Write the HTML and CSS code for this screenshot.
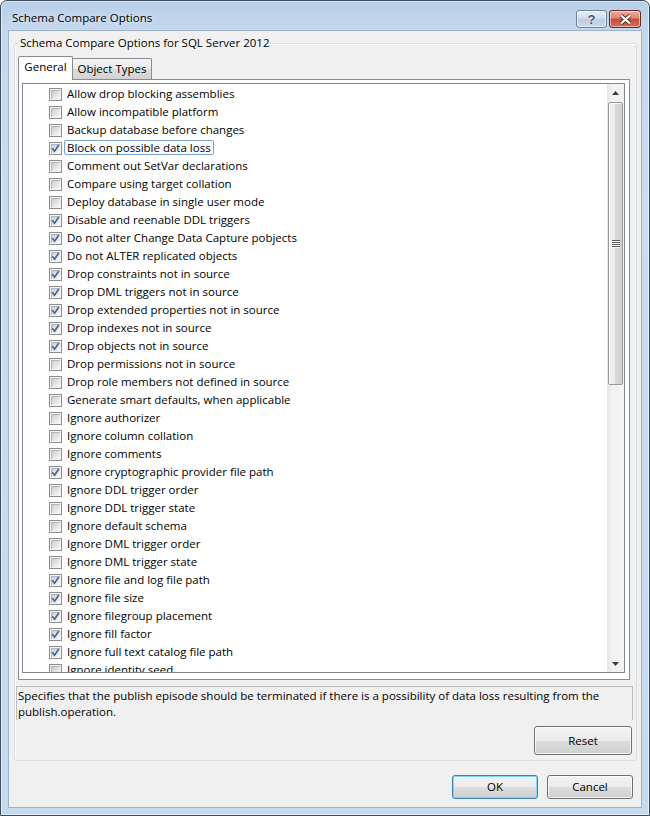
FILE: index.html
```html
<!DOCTYPE html>
<html>
<head>
<meta charset="utf-8">
<title>Schema Compare Options</title>
<link rel="stylesheet" href="styles.css">
</head>
<body>
<div class="window">
  <div class="titlebar">
    <span class="title">Schema Compare Options</span>
    <div class="caps">
      <div class="cap help"><span>?</span></div>
      <div class="cap close">
        <svg width="13" height="11" viewBox="0 0 13 11"><path d="M2 1.5 L11 9.5 M11 1.5 L2 9.5" stroke="#5a2419" stroke-width="4" fill="none"/><path d="M2 1.5 L11 9.5 M11 1.5 L2 9.5" stroke="#ffffff" stroke-width="2.3" fill="none"/></svg>
      </div>
    </div>
  </div>
  <div class="client">
    <fieldset class="group">
      <legend>Schema Compare Options for SQL Server 2012</legend>
      <div class="tabs">
        <div class="tab active">General</div>
        <div class="tab">Object Types</div>
      </div>
      <div class="tabpanel">
        <div class="listbox">
          <div class="items">
            <div class="row"><span class="cb"><span class="in"></span></span><span class="label">Allow drop blocking assemblies</span></div>
            <div class="row"><span class="cb"><span class="in"></span></span><span class="label">Allow incompatible platform</span></div>
            <div class="row"><span class="cb"><span class="in"></span></span><span class="label">Backup database before changes</span></div>
            <div class="row"><span class="cb on"><span class="in"><svg viewBox="0 0 9 9"><path d="M1.3 4.2 L3.6 7.2 L7.8 1"/></svg></span></span><span class="label focus">Block on possible data loss</span></div>
            <div class="row"><span class="cb"><span class="in"></span></span><span class="label">Comment out SetVar declarations</span></div>
            <div class="row"><span class="cb"><span class="in"></span></span><span class="label">Compare using target collation</span></div>
            <div class="row"><span class="cb"><span class="in"></span></span><span class="label">Deploy database in single user mode</span></div>
            <div class="row"><span class="cb on"><span class="in"><svg viewBox="0 0 9 9"><path d="M1.3 4.2 L3.6 7.2 L7.8 1"/></svg></span></span><span class="label">Disable and reenable DDL triggers</span></div>
            <div class="row"><span class="cb on"><span class="in"><svg viewBox="0 0 9 9"><path d="M1.3 4.2 L3.6 7.2 L7.8 1"/></svg></span></span><span class="label">Do not alter Change Data Capture pobjects</span></div>
            <div class="row"><span class="cb on"><span class="in"><svg viewBox="0 0 9 9"><path d="M1.3 4.2 L3.6 7.2 L7.8 1"/></svg></span></span><span class="label">Do not ALTER replicated objects</span></div>
            <div class="row"><span class="cb on"><span class="in"><svg viewBox="0 0 9 9"><path d="M1.3 4.2 L3.6 7.2 L7.8 1"/></svg></span></span><span class="label">Drop constraints not in source</span></div>
            <div class="row"><span class="cb on"><span class="in"><svg viewBox="0 0 9 9"><path d="M1.3 4.2 L3.6 7.2 L7.8 1"/></svg></span></span><span class="label">Drop DML triggers not in source</span></div>
            <div class="row"><span class="cb on"><span class="in"><svg viewBox="0 0 9 9"><path d="M1.3 4.2 L3.6 7.2 L7.8 1"/></svg></span></span><span class="label">Drop extended properties not in source</span></div>
            <div class="row"><span class="cb on"><span class="in"><svg viewBox="0 0 9 9"><path d="M1.3 4.2 L3.6 7.2 L7.8 1"/></svg></span></span><span class="label">Drop indexes not in source</span></div>
            <div class="row"><span class="cb on"><span class="in"><svg viewBox="0 0 9 9"><path d="M1.3 4.2 L3.6 7.2 L7.8 1"/></svg></span></span><span class="label">Drop objects not in source</span></div>
            <div class="row"><span class="cb"><span class="in"></span></span><span class="label">Drop permissions not in source</span></div>
            <div class="row"><span class="cb"><span class="in"></span></span><span class="label">Drop role members not defined in source</span></div>
            <div class="row"><span class="cb"><span class="in"></span></span><span class="label">Generate smart defaults, when applicable</span></div>
            <div class="row"><span class="cb"><span class="in"></span></span><span class="label">Ignore authorizer</span></div>
            <div class="row"><span class="cb"><span class="in"></span></span><span class="label">Ignore column collation</span></div>
            <div class="row"><span class="cb"><span class="in"></span></span><span class="label">Ignore comments</span></div>
            <div class="row"><span class="cb on"><span class="in"><svg viewBox="0 0 9 9"><path d="M1.3 4.2 L3.6 7.2 L7.8 1"/></svg></span></span><span class="label">Ignore cryptographic provider file path</span></div>
            <div class="row"><span class="cb"><span class="in"></span></span><span class="label">Ignore DDL trigger order</span></div>
            <div class="row"><span class="cb"><span class="in"></span></span><span class="label">Ignore DDL trigger state</span></div>
            <div class="row"><span class="cb"><span class="in"></span></span><span class="label">Ignore default schema</span></div>
            <div class="row"><span class="cb"><span class="in"></span></span><span class="label">Ignore DML trigger order</span></div>
            <div class="row"><span class="cb"><span class="in"></span></span><span class="label">Ignore DML trigger state</span></div>
            <div class="row"><span class="cb on"><span class="in"><svg viewBox="0 0 9 9"><path d="M1.3 4.2 L3.6 7.2 L7.8 1"/></svg></span></span><span class="label">Ignore file and log file path</span></div>
            <div class="row"><span class="cb on"><span class="in"><svg viewBox="0 0 9 9"><path d="M1.3 4.2 L3.6 7.2 L7.8 1"/></svg></span></span><span class="label">Ignore file size</span></div>
            <div class="row"><span class="cb on"><span class="in"><svg viewBox="0 0 9 9"><path d="M1.3 4.2 L3.6 7.2 L7.8 1"/></svg></span></span><span class="label">Ignore filegroup placement</span></div>
            <div class="row"><span class="cb on"><span class="in"><svg viewBox="0 0 9 9"><path d="M1.3 4.2 L3.6 7.2 L7.8 1"/></svg></span></span><span class="label">Ignore fill factor</span></div>
            <div class="row"><span class="cb on"><span class="in"><svg viewBox="0 0 9 9"><path d="M1.3 4.2 L3.6 7.2 L7.8 1"/></svg></span></span><span class="label">Ignore full text catalog file path</span></div>
            <div class="row"><span class="cb"><span class="in"></span></span><span class="label">Ignore identity seed</span></div>
          </div>
          <div class="vscroll">
            <div class="arrow"><svg width="7" height="4" viewBox="0 0 7 4"><path d="M0 4 L3.5 0 L7 4 Z" fill="#3c3c3c"/></svg></div>
            <div class="track">
              <div class="thumb"><span class="grip"></span></div>
            </div>
            <div class="arrow"><svg width="7" height="4" viewBox="0 0 7 4"><path d="M0 0 L7 0 L3.5 4 Z" fill="#3c3c3c"/></svg></div>
          </div>
        </div>
      </div>
      <div class="desc">Specifies that the publish episode should be terminated if there is a possibility of data loss resulting from the<br>publish.operation.</div>
      <div class="reset-row"><div class="btn reset">Reset</div></div>
    </fieldset>
    <div class="footer">
      <div class="btn ok">OK</div>
      <div class="btn cancel">Cancel</div>
    </div>
  </div>
</div>
</body>
</html>
```

FILE: styles.css
```css
* { box-sizing: border-box; }
html, body { margin: 0; padding: 0; }
body {
  width: 650px;
  height: 816px;
  overflow: hidden;
  background: #ffffff;
  font-family: "Open Sans", "Noto Sans", sans-serif;
  font-size: 11.5px;
  color: #000000;
}

.window {
  width: 650px;
  height: 816px;
  border: 1px solid #3e4b5c;
  border-radius: 7px 7px 0 0;
  background: linear-gradient(180deg, #b8cfe8 0px, #c4d8ee 30px, #cadcf0 200px, #c6daef 100%);
  box-shadow: inset 0 0 0 1px rgba(255, 255, 255, 0.55);
  padding: 0 7px 7px 7px;
  display: flex;
  flex-direction: column;
}

.titlebar {
  height: 29px;
  display: flex;
  align-items: flex-start;
  flex: none;
}
.title {
  margin: 9px 0 0 4px;
  line-height: 16px;
  text-shadow: 0 0 6px rgba(255, 255, 255, 0.9);
}
.caps {
  margin: 9px 1px 0 auto;
  display: flex;
  gap: 2px;
}
.cap {
  height: 18px;
  border-radius: 3px;
  border: 1px solid #6f819b;
  display: flex;
  align-items: center;
  justify-content: center;
  box-shadow: inset 0 0 0 1px rgba(255, 255, 255, 0.5);
}
.cap.help {
  width: 31px;
  background: linear-gradient(180deg, #e6edf6 0%, #d2deec 45%, #bccde3 50%, #c9d9ec 100%);
}
.cap.help span {
  font-family: "Liberation Sans", sans-serif;
  font-weight: bold;
  font-size: 13px;
  line-height: 13px;
  color: #44546a;
  text-shadow: 0 0 1px #ffffff, 0 0 2px #ffffff;
}
.cap.close {
  width: 32px;
  border-color: #6b2a21;
  background: linear-gradient(180deg, #eaaa9d 0%, #dc8676 45%, #c84a35 50%, #d0705c 100%);
}
.cap.close svg { display: block; }

.client {
  flex: 1;
  background: #f0f0f0;
  border: 1px solid #9eb2ca;
  display: flex;
  flex-direction: column;
}

.group {
  margin: 4px 4px 0 5px;
  border: 1px solid #d5dfe5;
  border-radius: 3px;
  padding: 5px 6px 5px 3px;
  min-width: 0;
  box-shadow: inset 1px 1px 0 #ffffff;
}
.group legend {
  padding: 0 2px;
  line-height: 16px;
}

.tabs {
  display: flex;
  align-items: flex-end;
  height: 23px;
  position: relative;
  z-index: 1;
}
.tab {
  border: 1px solid #898c95;
  border-bottom: none;
  border-radius: 2px 2px 0 0;
  text-align: center;
  white-space: nowrap;
}
.tab.active {
  width: 55px;
  height: 24px;
  margin-bottom: -1px;
  background: #ffffff;
  line-height: 20px;
  position: relative;
  z-index: 2;
}
.tab:not(.active) {
  width: 80px;
  height: 21px;
  margin-left: -1px;
  line-height: 20px;
  background: linear-gradient(180deg, #f3f3f3 0%, #ebebeb 50%, #dddddd 50%, #d2d2d2 100%);
}

.tabpanel {
  border: 1px solid #898c95;
  background: #ffffff;
  padding: 3px 4px 6px 3px;
}

.listbox {
  height: 590px;
  border: 1px solid #828790;
  display: flex;
  overflow: hidden;
  background: #ffffff;
}
.items {
  flex: 1;
  min-width: 0;
  padding: 0 0 0 26px;
  overflow: hidden;
}
.row {
  height: 18px;
  display: flex;
  align-items: center;
}
.cb {
  width: 13px;
  height: 13px;
  flex: none;
  border: 1px solid #8e8f8f;
  background: #f4f4f4;
  padding: 1px;
  margin-top: 2px;
}
.cb .in {
  display: block;
  width: 9px;
  height: 9px;
  background: linear-gradient(135deg, #c6cace 0%, #e2e4e6 55%, #f8f8f8 100%);
  box-shadow: inset 1px 1px 0 #b3b6ba;
}
.cb .in svg {
  display: block;
  width: 9px;
  height: 9px;
}
.cb .in svg path {
  fill: none;
  stroke: #46609c;
  stroke-width: 1.6;
}
.label {
  margin-left: 2px;
  padding: 0 2px;
  border: 1px solid transparent;
  border-radius: 2px;
  line-height: 13px;
  white-space: nowrap;
}
.label.focus {
  border-color: #7da2ce;
  background: #fafcff;
}

.vscroll {
  width: 17px;
  flex: none;
  display: flex;
  flex-direction: column;
  background: linear-gradient(90deg, #e6e6e6 0%, #f1f1f1 30%, #f4f4f4 100%);
}
.arrow {
  height: 17px;
  flex: none;
  display: flex;
  align-items: center;
  justify-content: center;
}
.arrow svg { display: block; }
.track { flex: 1; }
.thumb {
  margin: 1px 1px 0 1px;
  height: 283px;
  border: 1px solid #989898;
  border-radius: 2px;
  background: linear-gradient(90deg, #f3f3f3 0%, #e9e9e9 50%, #d8d8d8 50%, #cfcfcf 100%);
  box-shadow: inset 1px 1px 0 #fbfbfb;
  display: flex;
  align-items: center;
  justify-content: center;
}
.grip {
  display: block;
  width: 8px;
  height: 8px;
  background: repeating-linear-gradient(180deg, #5a5a5a 0px, #5a5a5a 1px, #fbfbfb 1px, #fbfbfb 2px);
}

.desc {
  margin: 6px -3px 0 -2px;
  height: 34px;
  border: 1px solid #bcbcbc;
  border-bottom: none;
  padding: 1px 1px 0 1px;
  line-height: 16px;
  white-space: nowrap;
  overflow: hidden;
}

.reset-row {
  display: flex;
  justify-content: flex-end;
  margin: 6px -2px 0 0;
}

.btn {
  height: 24px;
  border: 1px solid #707070;
  border-radius: 3px;
  background: linear-gradient(180deg, #f2f2f2 0%, #ebebeb 50%, #dddddd 50%, #cfcfcf 100%);
  box-shadow: inset 0 0 0 1px rgba(255, 255, 255, 0.75);
  display: flex;
  align-items: center;
  justify-content: center;
  line-height: 16px;
}
.btn.reset {
  width: 98px;
  height: 29px;
}
.footer {
  display: flex;
  justify-content: flex-end;
  gap: 9px;
  margin: 14px 8px 0 0;
}
.btn.ok, .btn.cancel { width: 86px; }
.btn.ok {
  border-color: #3c7fb1;
  box-shadow: inset 0 0 0 1px #88d4f6;
}
```
